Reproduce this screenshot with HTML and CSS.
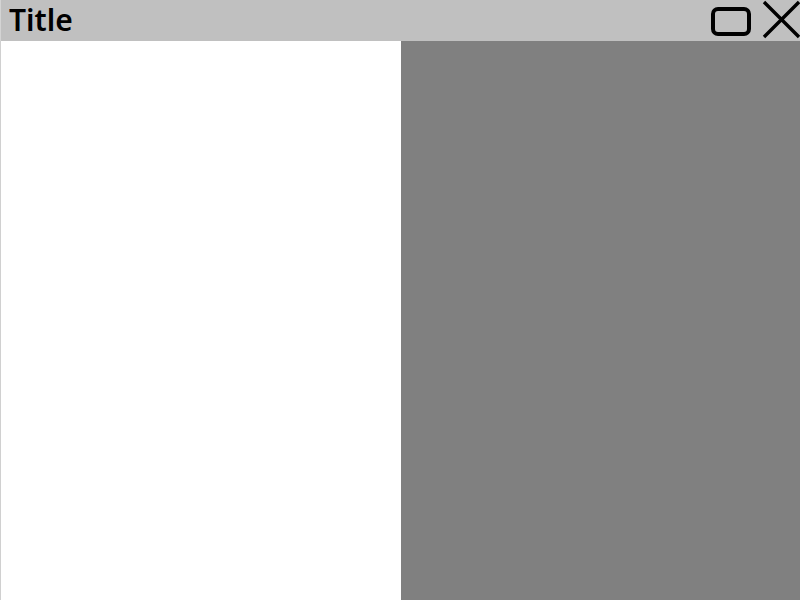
FILE: index.html
```html
<!DOCTYPE html>
<html>
<head>
<meta charset="utf-8">
<link rel="stylesheet" href="styles.css">
</head>
<body>
<div class="window">
  <div class="titlebar">
    <span class="title">Title</span>
    <div class="controls">
      <svg class="btn-max" width="44" height="41" viewBox="0 0 44 41">
        <rect x="3" y="10" width="36" height="25" rx="5" ry="5" fill="none" stroke="#000" stroke-width="4"/>
      </svg>
      <svg class="btn-close" width="38" height="41" viewBox="0 0 38 41">
        <path d="M2 3 L37 38 M37 3 L2 38" stroke="#000" stroke-width="3.4" fill="none"/>
      </svg>
    </div>
  </div>
  <div class="content">
    <div class="pane-left"></div>
    <div class="pane-right"></div>
  </div>
</div>
</body>
</html>
```
FILE: styles.css
```css
html, body {
  margin: 0;
  padding: 0;
  width: 800px;
  height: 600px;
  overflow: hidden;
}
.window {
  display: flex;
  flex-direction: column;
  width: 800px;
  height: 600px;
  font-family: "Noto Sans", "Open Sans", sans-serif;
}
.titlebar {
  height: 41px;
  background: #c0c0c0;
  display: flex;
  align-items: flex-start;
  justify-content: space-between;
  border-left: 1px solid #d4d4d4;
  box-sizing: border-box;
}
.title {
  font-size: 30px;
  line-height: 40px;
  color: #000;
  padding-left: 8px;
  font-weight: 600;
}
.controls {
  display: flex;
  align-items: flex-start;
  height: 41px;
}
.btn-max {
  display: block;
  margin-top: -1px;
  margin-right: 8px;
}
.btn-close {
  display: block;
  margin-top: -1px;
}
.content {
  flex: 1;
  display: flex;
}
.pane-left {
  width: 400px;
  background: #fff;
  border-left: 1px solid #d0d0d0;
}
.pane-right {
  flex: 1;
  background: #808080;
}
```
